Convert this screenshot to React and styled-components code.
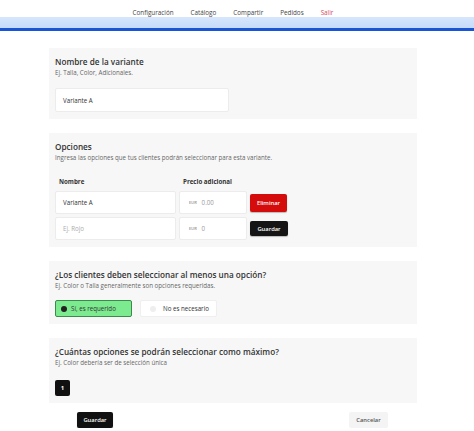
import React from 'react';
import styled, { createGlobalStyle } from 'styled-components';

const Global = createGlobalStyle`
  body {
    margin: 0;
    background: #fff;
    font-family: "Open Sans", "Noto Sans", sans-serif;
    color: #333;
  }
`;

const Header = styled.div`
  height: 17px;
  display: flex;
  justify-content: center;
  align-items: center;
  gap: 17px;
  padding-right: 8px;
  background: #fff;
`;

const NavLink = styled.span`
  font-size: 6.3px;
  color: ${p => (p.danger ? '#d9485f' : '#444')};
  padding-top: 8px;
`;

const Band = styled.div`
  height: 11px;
  background: linear-gradient(#d6e6fc, #c7dcfa);
  border-bottom: 3px solid #1a55d4;
`;

const Page = styled.div`
  width: 368px;
  margin: ${p => p.mt ?? 17}px 0 0 49px;
  display: flex;
  flex-direction: column;
  gap: 14px;
`;

const Card = styled.section`
  background: #f7f7f7;
  padding: 8px 6px 7px;
`;

const Title = styled.h2`
  margin: 0;
  font-size: 8.2px;
  font-weight: 600;
  line-height: 11px;
  color: #333;
`;

const Sub = styled.p`
  margin: 1px 0 0;
  font-size: 6.2px;
  line-height: 10px;
  color: #666;
`;

const Field = styled.div`
  width: ${p => p.w}px;
  height: ${p => p.h || 23}px;
  box-sizing: border-box;
  background: #fff;
  border: 1px solid #ececec;
  border-radius: 2px;
  display: flex;
  align-items: center;
  padding-left: ${p => p.pl || 7}px;
  font-size: 6.2px;
  color: ${p => (p.placeholder ? '#aaa' : '#333')};
  margin-top: ${p => p.mt || 0}px;
`;

const Currency = styled.span`
  font-size: 4px;
  color: #666;
  margin-right: 5px;
`;

const PriceValue = styled.span`
  color: #999;
`;

const HeadRow = styled.div`
  display: grid;
  grid-template-columns: 124px 70px;
  margin: 14px 0 5px;
  padding-left: 4px;
  font-size: 6.2px;
  font-weight: 700;
  color: #333;
`;

const OptRow = styled.div`
  display: flex;
  align-items: center;
  gap: 3px;
  margin-top: ${p => p.mt || 0}px;
`;

const Btn = styled.button`
  font-family: inherit;
  font-size: 5.8px;
  font-weight: 600;
  color: ${p => (p.light ? '#555' : '#fff')};
  background: ${p => p.bg};
  border: none;
  border-radius: 2px;
  width: ${p => p.w}px;
  height: ${p => p.h || 17}px;
  padding: 0;
  box-shadow: ${p => (p.light ? 'none' : '0 1px 1px rgba(0,0,0,0.25)')};
`;

const Choices = styled.div`
  display: flex;
  gap: 8px;
  margin-top: 9px;
`;

const Choice = styled.div`
  width: 77px;
  height: 17px;
  box-sizing: border-box;
  border-radius: 2px;
  display: flex;
  align-items: center;
  gap: 4px;
  padding-left: 5px;
  font-size: 6.2px;
  color: #333;
  background: ${p => (p.active ? '#7cea8f' : '#fff')};
  border: 1px solid ${p => (p.active ? '#3c8a4b' : '#efefef')};
`;

const Dot = styled.span`
  width: 6px;
  height: 6px;
  border-radius: 50%;
  background: ${p => (p.active ? '#222' : '#eee')};
  margin-left: ${p => (p.active ? 0 : 4)}px;
  margin-right: ${p => (p.active ? 0 : 3)}px;
`;

const Count = styled.div`
  width: 15px;
  height: 16px;
  margin-top: 12px;
  background: #111;
  color: #fff;
  border-radius: 2px;
  font-size: 6px;
  font-weight: 700;
  display: flex;
  align-items: center;
  justify-content: center;
`;

const Footer = styled.div`
  display: flex;
  justify-content: space-between;
  padding: 0 29px 0 28px;
  margin-top: 9px;
`;

export default function App() {
  return (
    <>
      <Global />
      <Header>
        <NavLink>Configuración</NavLink>
        <NavLink>Catálogo</NavLink>
        <NavLink>Compartir</NavLink>
        <NavLink>Pedidos</NavLink>
        <NavLink danger>Salir</NavLink>
      </Header>
      <Band />
      <Page>
        <Card>
          <Title>Nombre de la variante</Title>
          <Sub>Ej. Talla, Color, Adicionales.</Sub>
          <Field w={174} h={24} mt={10}>Variante A</Field>
        </Card>

        <Card>
          <Title>Opciones</Title>
          <Sub>Ingresa las opciones que tus clientes podrán seleccionar para esta variante.</Sub>
          <HeadRow>
            <span>Nombre</span>
            <span>Precio adicional</span>
          </HeadRow>
          <OptRow>
            <Field w={121}>Variante A</Field>
            <Field w={68} pl={9}><Currency>EUR</Currency><PriceValue>0.00</PriceValue></Field>
            <Btn bg="#d40c0c" w={37} h={18}>Eliminar</Btn>
          </OptRow>
          <OptRow mt={3}>
            <Field w={121} placeholder>Ej. Rojo</Field>
            <Field w={68} pl={9}><Currency>EUR</Currency><PriceValue>0</PriceValue></Field>
            <Btn bg="#151515" w={38} h={15}>Guardar</Btn>
          </OptRow>
        </Card>

        <Card>
          <Title>¿Los clientes deben seleccionar al menos una opción?</Title>
          <Sub>Ej. Color o Talla generalmente son opciones requeridas.</Sub>
          <Choices>
            <Choice active><Dot active />Sí, es requerido</Choice>
            <Choice><Dot />No es necesario</Choice>
          </Choices>
        </Card>

        <Card>
          <Title>¿Cuántas opciones se podrán seleccionar como máximo?</Title>
          <Sub>Ej. Color debería ser de selección única</Sub>
          <Count>1</Count>
        </Card>
      </Page>
      <Page mt={0}>
        <Footer>
          <Btn bg="#111" w={36} h={16}>Guardar</Btn>
          <Btn bg="#f4f4f4" light w={39} h={16}>Cancelar</Btn>
        </Footer>
      </Page>
    </>
  );
}
